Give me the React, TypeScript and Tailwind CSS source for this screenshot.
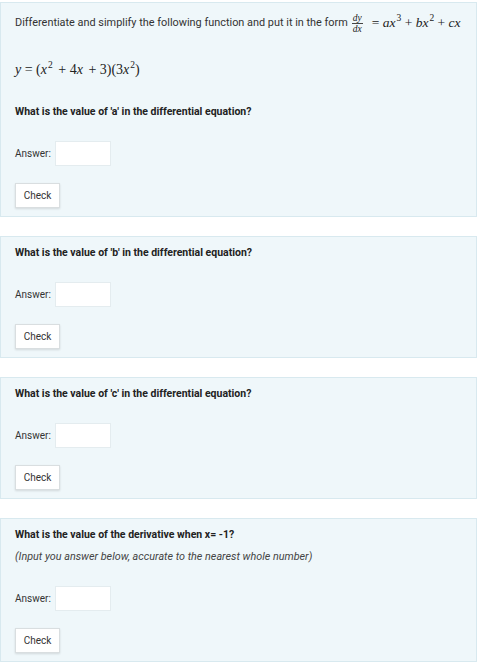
import React from "react";

const serif = { fontFamily: '"Liberation Serif", "DejaVu Serif", serif' };

function V({ children }: { children: React.ReactNode }) {
  return <span className="italic">{children}</span>;
}

function Sup({ children }: { children: React.ReactNode }) {
  return <span className="text-[9.5px] relative -top-[6px] not-italic ml-[1px]">{children}</span>;
}

function AnswerBlock() {
  return (
    <>
      <div className="mt-[22px] flex items-center h-[25px]">
        <span className="text-[10px] text-[#333]">Answer:</span>
        <input
          type="text"
          className="ml-[4px] w-[56px] h-[25px] bg-white border border-[#e4ecef] outline-none"
        />
      </div>
      <button className="mt-[17px] w-[45px] h-[25px] bg-white border border-[#d9dee0] shadow-[0_1px_2px_rgba(0,0,0,0.12)] text-[10px] text-[#333] flex items-center justify-center">
        Check
      </button>
    </>
  );
}

function Card({ children }: { children: React.ReactNode }) {
  return (
    <div className="w-[477px] border border-[#d8e9ef] bg-[#eff7fa] pl-[14px] pt-[9px] pb-[8px] flex flex-col items-start">
      {children}
    </div>
  );
}

function Question({ children }: { children: React.ReactNode }) {
  return <div className="h-[14px] leading-[14px] text-[10.5px] font-bold text-[#222]">{children}</div>;
}

export default function App() {
  return (
    <div className="bg-white w-[488px] h-[666px] pt-[2px] flex flex-col gap-[19px]" style={{ fontFamily: 'Roboto, "Liberation Sans", sans-serif' }}>
      <Card>
        <div className="h-[22px] flex items-center text-[10.9px] text-[#333]">
          <span>Differentiate and simplify the following function and put it in the form</span>
          <span className="inline-flex items-center ml-[4px] text-[#222]" style={serif}>
            <span className="inline-flex flex-col items-center leading-[10px] text-[9.5px] italic">
              <span className="px-[1px]">dy</span>
              <span className="block w-full h-px bg-[#444]"></span>
              <span className="px-[1px]">dx</span>
            </span>
            <span className="ml-[9px] text-[13.5px] whitespace-pre">
              {"= "}
              <V>ax</V>
              <Sup>3</Sup>
              {" + "}
              <V>bx</V>
              <Sup>2</Sup>
              {" + "}
              <V>cx</V>
            </span>
          </span>
        </div>
        <div className="mt-[27px] h-[18px] leading-[18px] text-[14px] text-[#222] whitespace-pre" style={serif}>
          <V>y</V>
          {" = ("}
          <V>x</V>
          <Sup>2</Sup>
          <span className="ml-[2px]">{" + 4"}</span>
          <V>x</V>
          <span className="ml-[2px]">{" + 3)(3"}</span>
          <V>x</V>
          <Sup>2</Sup>
          {")"}
        </div>
        <div className="mt-[26px]">
          <Question>What is the value of 'a' in the differential equation?</Question>
        </div>
        <AnswerBlock />
      </Card>
      <Card>
        <Question>What is the value of 'b' in the differential equation?</Question>
        <AnswerBlock />
      </Card>
      <Card>
        <Question>What is the value of 'c' in the differential equation?</Question>
        <AnswerBlock />
      </Card>
      <Card>
        <Question>What is the value of the derivative when x= -1?</Question>
        <div className="mt-[8px] h-[14px] leading-[14px] text-[10.8px] italic text-[#444]">
          (Input you answer below, accurate to the nearest whole number)
        </div>
        <AnswerBlock />
      </Card>
    </div>
  );
}
